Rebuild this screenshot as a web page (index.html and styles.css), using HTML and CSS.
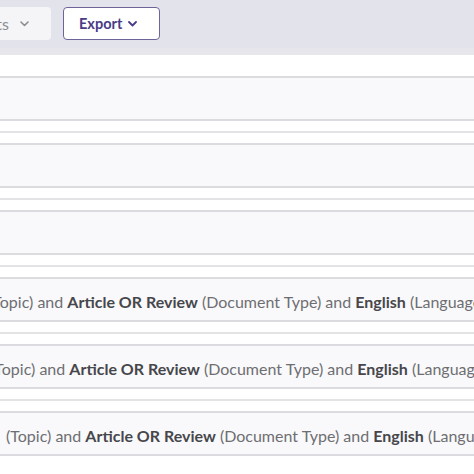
FILE: index.html
```html
<!DOCTYPE html>
<html lang="en">
<head>
<meta charset="utf-8">
<title>Search history</title>
<link rel="stylesheet" href="styles.css">
</head>
<body>
<div class="toolbar">
  <button class="btn btn-ghost">Add to results <span class="chev"><svg width="9" height="6" viewBox="0 0 9 6"><path d="M1 1l3.5 3.5L8 1" fill="none" stroke="currentColor" stroke-width="1.6" stroke-linecap="round" stroke-linejoin="round"/></svg></span></button>
  <button class="btn btn-export">Export <span class="chev"><svg width="9" height="6" viewBox="0 0 9 6"><path d="M1 1l3.5 3.5L8 1" fill="none" stroke="currentColor" stroke-width="1.8" stroke-linecap="round" stroke-linejoin="round"/></svg></span></button>
</div>
<div class="band"></div>
<div class="list">
  <div class="item"><div class="panel"></div><div class="sep"></div></div>
  <div class="item"><div class="panel"></div><div class="sep"></div></div>
  <div class="item"><div class="panel"></div><div class="sep"></div></div>
  <div class="item"><div class="panel"><p class="query q1">(Topic) and <b>Article OR Review</b> (Document Type) and <b>English</b> (Language)</p></div><div class="sep"></div></div>
  <div class="item"><div class="panel"><p class="query q2">(Topic) and <b>Article OR Review</b> (Document Type) and <b>English</b> (Language)</p></div><div class="sep"></div></div>
  <div class="item"><div class="panel"><p class="query q3">(Topic) and <b>Article OR Review</b> (Document Type) and <b>English</b> (Language)</p></div></div>
</div>
</body>
</html>
```
FILE: styles.css
```css
html, body {
  margin: 0;
  padding: 0;
  background: #ffffff;
  overflow: hidden;
  font-family: "Lato", "Open Sans", sans-serif;
}

.toolbar {
  height: 48px;
  background: #e3e3eb;
  display: flex;
  align-items: flex-start;
  gap: 12px;
  padding-top: 7px;
  box-sizing: border-box;
}

.btn {
  height: 33px;
  display: flex;
  align-items: center;
  gap: 7px;
  font-family: inherit;
  font-size: 16px;
  border-radius: 4px;
  box-sizing: border-box;
  white-space: nowrap;
}

.btn-ghost {
  width: 150px;
  margin-left: -99px;
  background: #f5f5f7;
  border: none;
  color: #8c8c92;
  justify-content: flex-end;
  padding: 0 22px 0 0;
  gap: 11px;
}

.btn-export {
  width: 97px;
  background: #ffffff;
  border: 1.5px solid #6f6499;
  color: #4a3b86;
  font-size: 14.5px;
  font-weight: 700;
  justify-content: flex-start;
  padding: 0 0 0 15px;
  gap: 6px;
}

.chev {
  display: flex;
  align-items: center;
}

.band {
  height: 7px;
  background: #e7e7eb;
}

.list {
  padding-top: 21px;
}

.item {
  display: flex;
  flex-direction: column;
}

.panel {
  height: 45px;
  box-sizing: border-box;
  border-top: 2px solid #dcdce0;
  border-bottom: 2px solid #dcdce0;
  background: #f9f9fb;
  display: flex;
  align-items: center;
  overflow: hidden;
}

.sep {
  height: 2px;
  margin: 10px 0;
  background: #e3e3e6;
}

.query {
  margin: 0;
  padding-top: 3px;
  white-space: nowrap;
  font-size: 16px;
  color: #6e6e72;
}

.query b {
  color: #47474b;
  font-weight: 700;
}

.q1 { margin-left: -12px; }
.q2 { margin-left: -10px; }
.q3 { margin-left: 6px; }
```
